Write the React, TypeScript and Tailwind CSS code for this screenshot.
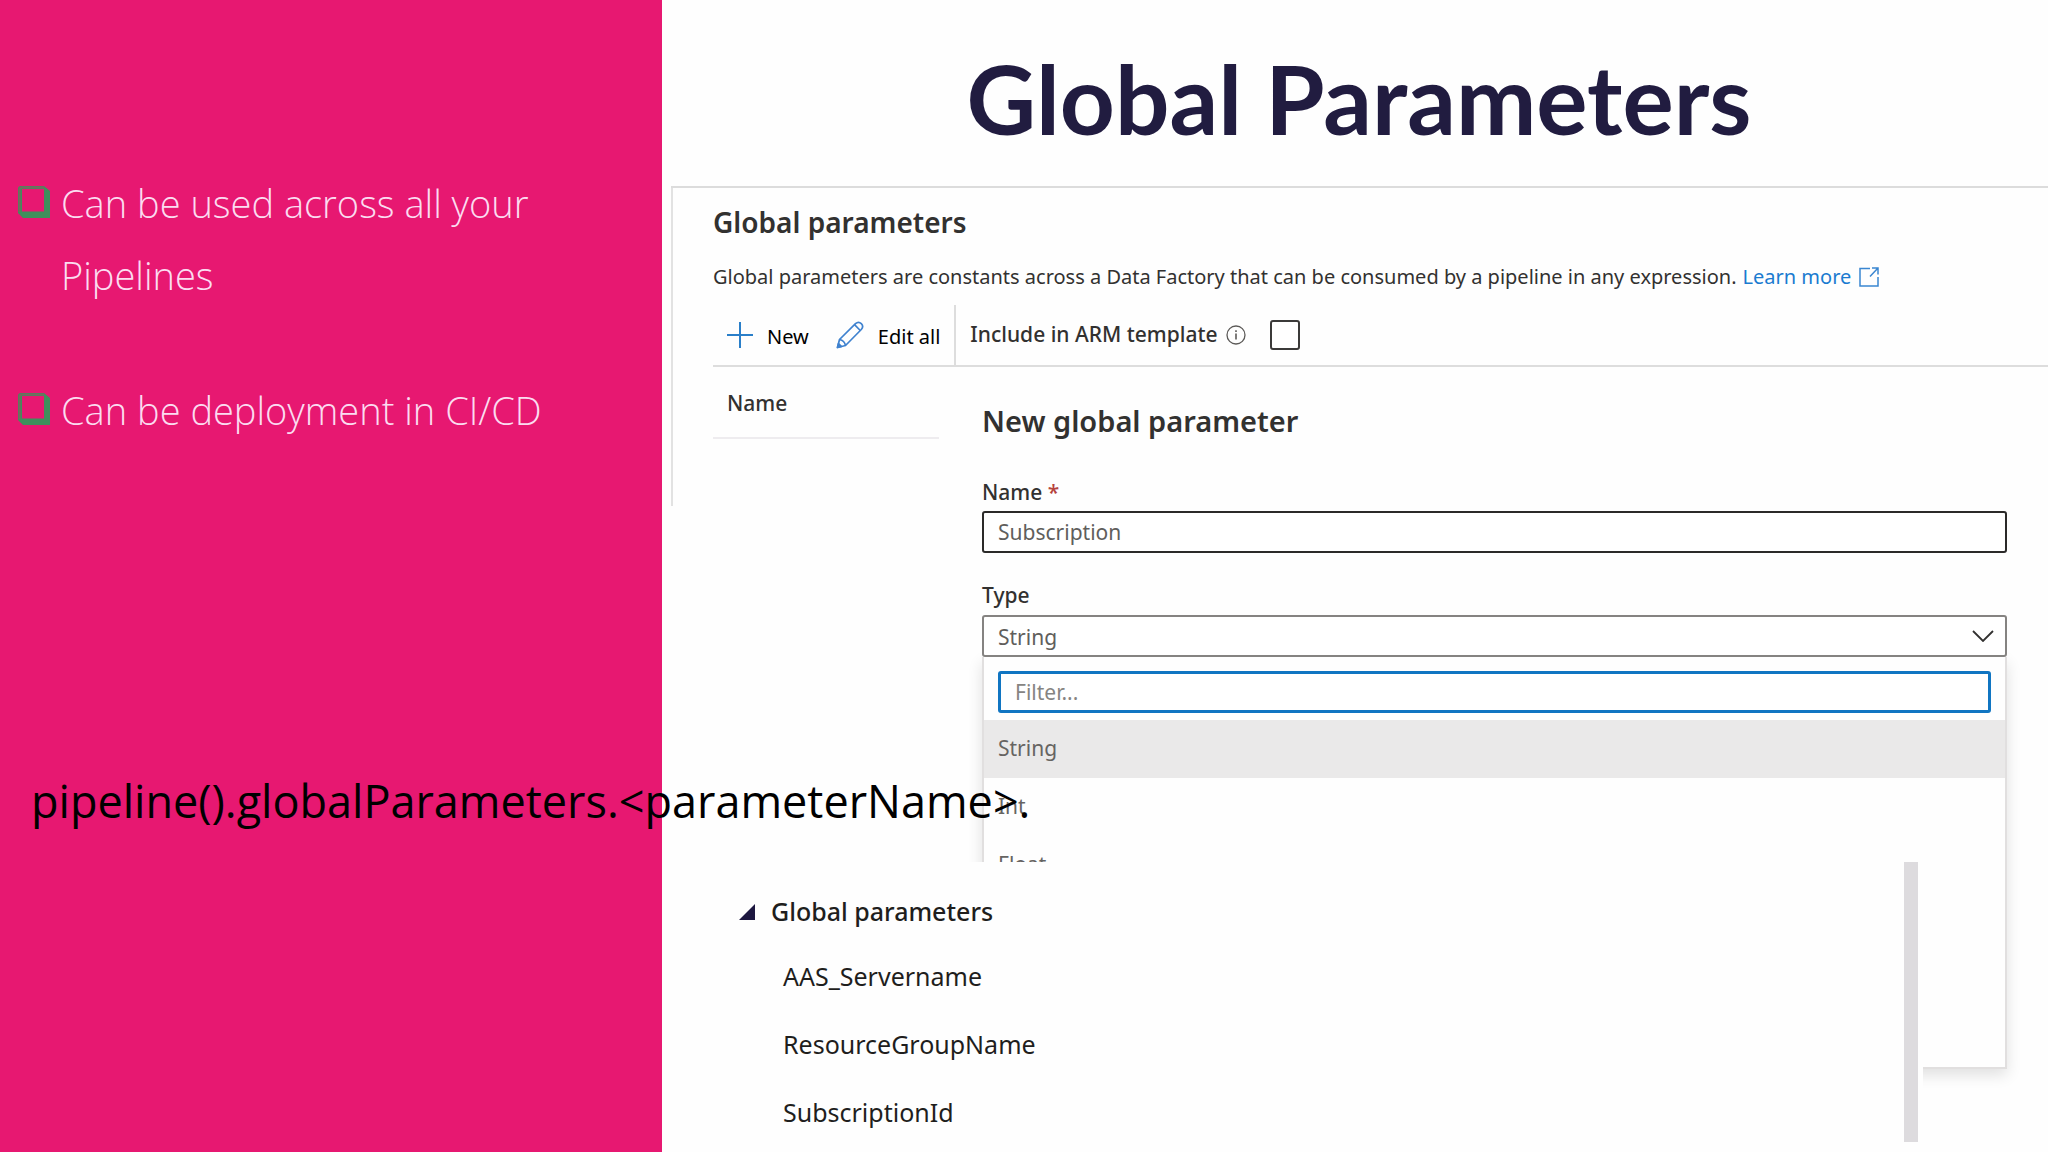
import type { ReactNode } from 'react';

const notes = ['Can be used across all your Pipelines', 'Can be deployment in CI/CD'];
const typeOptions = ['String', 'Int', 'Float'];
const parameters = ['AAS_Servername', 'ResourceGroupName', 'SubscriptionId'];

function BoxBullet() {
  return (
    <svg aria-hidden="true" viewBox="0 0 32 32" className="mt-[19px] h-8 w-8 shrink-0">
      <path
        fillRule="evenodd"
        fill="#3f8f5c"
        d="M3 0H26L32 5V32H5L0 27V3Q0 0 3 0ZM4 3V25.500H26V3Z"
      />
      <path d="M1.500 26V4Q1.500 1.500 4 1.500H26" fill="none" stroke="#77685f" strokeWidth="2" />
    </svg>
  );
}

function PlusIcon() {
  return (
    <svg aria-hidden="true" viewBox="0 0 26 26" className="h-[26px] w-[26px]" fill="none" stroke="#2a7fc9" strokeWidth="2">
      <path d="M13 0V26M0 13H26" />
    </svg>
  );
}

function PencilIcon() {
  return (
    <svg aria-hidden="true" viewBox="0 0 28 28" className="h-7 w-7" fill="none" stroke="#3f82cf" strokeWidth="1.700" strokeLinejoin="round">
      <path d="M1.500 26.500L3.500 18.500L19.500 2.700Q22.500 0 25.300 2.700Q28 5.500 25.300 8.500L9.500 24.500Z" />
      <path d="M3.500 18.500Q8.500 19.500 9.500 24.500M18.500 3.700L24.300 9.500" />
      <path d="M1.500 26.500L2.500 22.500L5.500 25.500Z" fill="#3f82cf" />
    </svg>
  );
}

function InfoIcon() {
  return (
    <svg aria-hidden="true" viewBox="0 0 20 20" className="ml-2 h-5 w-5" fill="none" stroke="#5c5a58" strokeWidth="1.300">
      <circle cx="10" cy="10" r="9" />
      <path d="M10 8.500V14.500M10 5.200V7" strokeWidth="1.600" />
    </svg>
  );
}

function ExternalIcon() {
  return (
    <svg aria-hidden="true" viewBox="0 0 20 20" className="h-5 w-5" fill="none" stroke="#3a86d1" strokeWidth="1.500">
      <path d="M11 1.500H1V19H19V10M13 1H19V7.500M19 1L11 9.500" />
    </svg>
  );
}

function ToolButton({ icon, children }: { icon: ReactNode; children: ReactNode }) {
  return (
    <button type="button" className="flex items-center gap-[14px] whitespace-nowrap text-black">
      {icon}
      <span className="pt-1">{children}</span>
    </button>
  );
}

function Toolbar() {
  return (
    <div className="mt-[14px] flex h-[62px] items-stretch border-b-2 border-[#dddddd] text-xl">
      <div className="flex items-center gap-[27px] border-r-2 border-[#dddddd] pr-[14px] pl-[14px]">
        <ToolButton icon={<PlusIcon />}>New</ToolButton>
        <ToolButton icon={<PencilIcon />}>Edit all</ToolButton>
      </div>
      <div className="flex items-center pl-[14px]">
        <label htmlFor="arm" className="text-[21px] font-medium whitespace-nowrap">
          Include in ARM template
        </label>
        <InfoIcon />
        <input
          id="arm"
          type="checkbox"
          className="ml-6 h-[30px] w-[30px] appearance-none rounded-[3px] border-2 border-[#3b3a39] bg-white"
        />
      </div>
    </div>
  );
}

function ParameterForm() {
  return (
    <form className="min-w-0 flex-1 pt-[34px] pr-[41px] text-[21px]">
      <h3 className="text-[29px] leading-10 font-semibold">New global parameter</h3>

      <label htmlFor="name" className="mt-[37px] block leading-7 font-medium">
        Name <span className="text-[#b5433c]">*</span>
      </label>
      <input
        id="name"
        type="text"
        defaultValue="Subscription"
        className="mt-[5px] block h-[42px] w-full rounded-[3px] border-2 border-[#2b2a29] bg-white px-[14px] text-[#605e5c] outline-none"
      />

      <label htmlFor="type" className="mt-7 block leading-7 font-medium">
        Type
      </label>
      <div className="relative mt-[6px]">
        <select
          id="type"
          defaultValue="String"
          className="block h-[42px] w-full appearance-none rounded-[3px] border-2 border-[#858381] bg-white px-[14px] pt-1 text-[#605e5c] outline-none"
        >
          {typeOptions.map((option) => (
            <option key={option}>{option}</option>
          ))}
        </select>
        <svg aria-hidden="true" viewBox="0 0 22 12" className="pointer-events-none absolute top-[15px] right-[13px] h-3 w-[22px]" fill="none" stroke="#323130" strokeWidth="1.800">
          <path d="M1 1L11 11L21 1" />
        </svg>
      </div>

      <div className="h-[412px] border-x-2 border-b-2 border-[#e1dfdf] bg-[#fefefe] pt-[14px] shadow-[0_6px_14px_rgba(0,0,0,0.12)]">
        <div className="px-[14px]">
          <input
            type="text"
            aria-label="Filter"
            placeholder="Filter..."
            className="block h-[42px] w-full rounded-[3px] border-3 border-[#1075c2] bg-white px-[14px] outline-none placeholder:text-[#868482]"
          />
        </div>
        <ul role="listbox" aria-label="Type options" className="mt-[7px] text-[#666462]">
          {typeOptions.map((option, index) => (
            <li
              key={option}
              role="option"
              aria-selected={index === 0}
              className="flex h-[58px] items-center px-[14px] aria-selected:bg-[#eae9e9]"
            >
              {option}
            </li>
          ))}
        </ul>
      </div>
    </form>
  );
}

function ParameterTree() {
  return (
    <section className="absolute top-[862px] right-[125px] bottom-0 left-[34px] flex bg-[#fefefe]">
      <div className="flex-1 pt-[30px] pl-[43px] text-[25px] text-[#1f1e1d]">
        <h3 className="flex h-10 items-center gap-4 font-medium">
          <svg aria-hidden="true" viewBox="0 0 16 16" className="h-4 w-4">
            <path d="M16 0V16H0Z" fill="#1d1740" />
          </svg>
          Global parameters
        </h3>
        <ul className="mt-[10px] pl-11">
          {parameters.map((name) => (
            <li key={name} className="h-[68px] leading-[68px]">
              {name}
            </li>
          ))}
        </ul>
      </div>
      <div className="mr-[5px] mb-[10px] w-[14px] bg-[#dddbde]" />
    </section>
  );
}

export default function App() {
  return (
    <div className="relative flex min-h-screen overflow-hidden bg-[#fefefe] font-['Noto_Sans',sans-serif] text-[#323130]">
      <aside className="w-[662px] shrink-0 bg-[#e71871] pt-[167px] pr-[100px] pl-[18px]">
        <ul className="space-y-[63px] font-['Open_Sans',sans-serif] text-[38px] leading-[72px] font-light text-[#fbdcf0]">
          {notes.map((note) => (
            <li key={note} className="flex gap-[11px]">
              <BoxBullet />
              <span>{note}</span>
            </li>
          ))}
        </ul>
      </aside>

      <main className="relative min-w-0 flex-1">
        <h1 className="h-[186px] pt-[50px] pl-2 text-center font-['Lato',sans-serif] text-8xl leading-none font-bold text-[#211c40]">
          Global Parameters
        </h1>
        <section className="ml-[9px] flex items-start border-t-2 border-[#dcdcdc]">
          <div className="h-[318px] w-0.5 bg-[#e2e2e2]" />
          <div className="min-w-0 flex-1 pt-[14px] pl-10">
            <h2 className="text-[28px] leading-10 font-semibold">Global parameters</h2>
            <p className="mt-[21px] flex items-center text-xl leading-7 whitespace-nowrap">
              Global parameters are constants across a Data Factory that can be consumed by a pipeline in any expression.
              <a href="#learn" className="ml-[6px] flex items-center gap-2 text-[#1a7bd0]">
                Learn more
                <ExternalIcon />
              </a>
            </p>
            <Toolbar />
            <div className="flex items-start gap-[43px]">
              <div className="flex h-[72px] w-[226px] items-center border-b-2 border-[#eeecef] pt-1 pl-[14px] text-[21px] font-medium">
                Name
              </div>
              <ParameterForm />
            </div>
          </div>
        </section>
        <ParameterTree />
      </main>

      <p className="absolute top-[771px] left-[31px] font-['Open_Sans',sans-serif] text-[45px] leading-[60px] whitespace-nowrap text-black">
        pipeline().globalParameters.&lt;parameterName&gt;.
      </p>
    </div>
  );
}
